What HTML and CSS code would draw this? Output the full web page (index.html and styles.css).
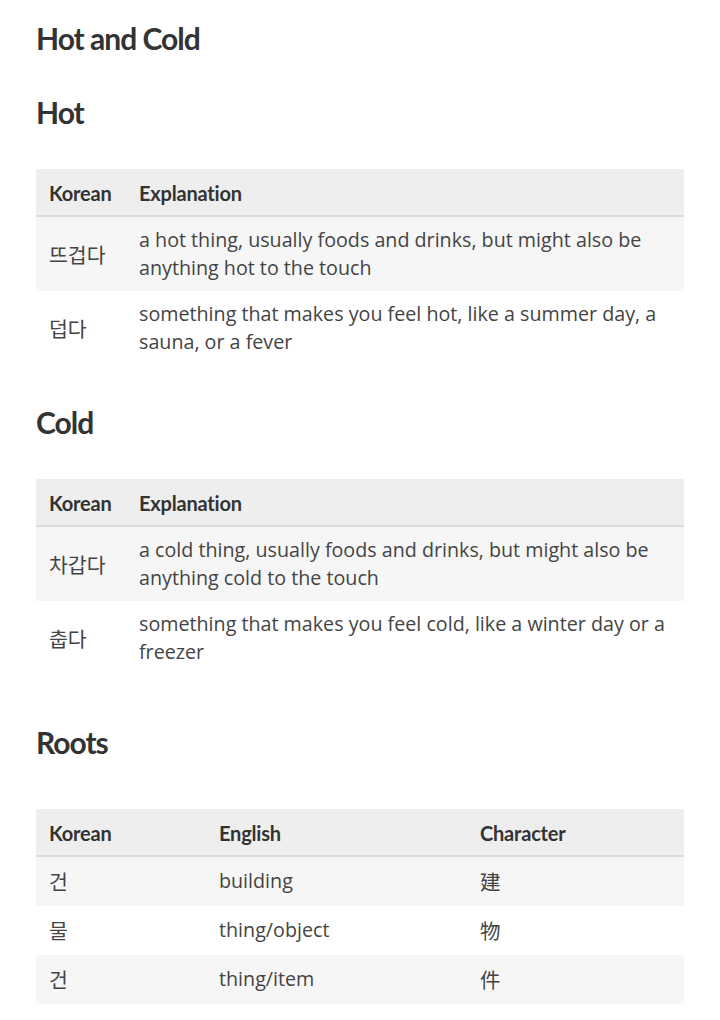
FILE: index.html
```html
<!DOCTYPE html>
<html lang="en">
<head>
<meta charset="utf-8">
<title>Hot and Cold</title>
<link rel="stylesheet" href="styles.css">
</head>
<body>
<main class="page">
  <h1 class="title">Hot and Cold</h1>

  <h2 class="section">Hot</h2>
  <table class="vocab">
    <thead>
      <tr><th class="col-ko">Korean</th><th>Explanation</th></tr>
    </thead>
    <tbody>
      <tr><td class="ko">뜨겁다</td><td>a hot thing, usually foods and drinks, but might also be anything hot to the touch</td></tr>
      <tr><td class="ko">덥다</td><td>something that makes you feel hot, like a summer day, a sauna, or a fever</td></tr>
    </tbody>
  </table>

  <h2 class="section">Cold</h2>
  <table class="vocab">
    <thead>
      <tr><th class="col-ko">Korean</th><th>Explanation</th></tr>
    </thead>
    <tbody>
      <tr><td class="ko">차갑다</td><td>a cold thing, usually foods and drinks, but might also be anything cold to the touch</td></tr>
      <tr><td class="ko">춥다</td><td>something that makes you feel cold, like a winter day or a freezer</td></tr>
    </tbody>
  </table>

  <h2 class="section section-roots">Roots</h2>
  <table class="vocab roots">
    <thead>
      <tr><th class="r1">Korean</th><th class="r2">English</th><th>Character</th></tr>
    </thead>
    <tbody>
      <tr><td class="ko">건</td><td>building</td><td class="ko">建</td></tr>
      <tr><td class="ko">물</td><td>thing/object</td><td class="ko">物</td></tr>
      <tr><td class="ko">건</td><td>thing/item</td><td class="ko">件</td></tr>
    </tbody>
  </table>
</main>
</body>
</html>
```

FILE: styles.css
```css
html, body {
  margin: 0;
  padding: 0;
  background: #ffffff;
}

body {
  font-family: "Open Sans", "Noto Sans CJK KR", sans-serif;
  color: #444;
}

.page {
  padding: 14px 36px 0 36px;
}

.title {
  font-family: Lato, "Open Sans", sans-serif;
  font-weight: 700;
  font-size: 30px;
  letter-spacing: -1px;
  line-height: 48px;
  color: #333;
  margin: 0 0 26px 0;
}

.section {
  font-family: Lato, "Open Sans", sans-serif;
  font-weight: 700;
  font-size: 30px;
  letter-spacing: -1px;
  line-height: 48px;
  color: #333;
  margin: 0 0 33px 0;
}

.section-roots {
  margin-top: 43px;
  margin-bottom: 43px;
}

.vocab {
  width: 100%;
  border-collapse: collapse;
  margin: 0 0 33px 0;
  font-size: 19.7px;
}

.vocab th {
  font-family: Lato, "Open Sans", sans-serif;
  font-weight: 700;
  font-size: 20px;
  letter-spacing: -0.2px;
  text-align: left;
  color: #333;
  background: #eeeeee;
  line-height: 28px;
  padding: 10px 13px 8px 13px;
  border-bottom: 2px solid #dcdcdc;
}

.vocab td {
  line-height: 28px;
  padding: 9px 13px;
  vertical-align: middle;
}

.vocab tbody tr:nth-child(odd) td {
  background: #f6f6f6;
}

.col-ko {
  width: 64px;
}

.ko {
  font-family: "Noto Sans CJK KR", sans-serif;
  font-size: 20.5px;
  font-weight: 400;
  white-space: nowrap;
}

.roots td {
  padding-top: 10px;
  padding-bottom: 11px;
}

.r1 {
  width: 144px;
}

.r2 {
  width: 235px;
}
```
